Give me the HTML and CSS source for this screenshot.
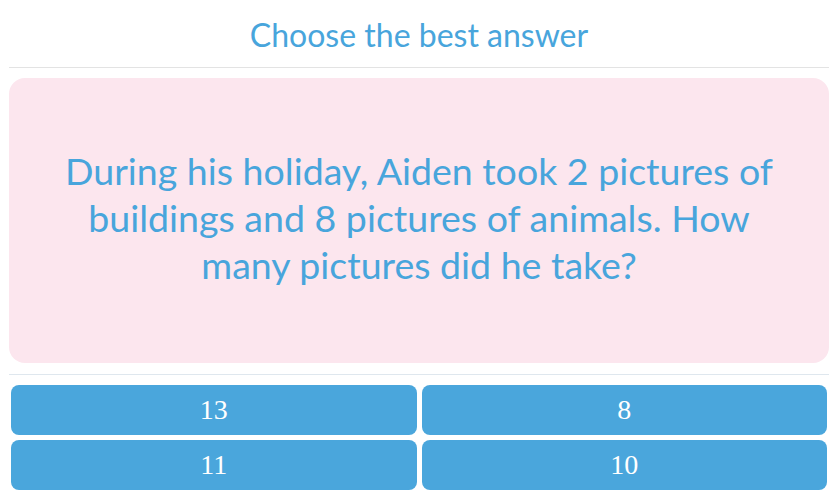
FILE: index.html
```html
<!DOCTYPE html>
<html lang="en">
<head>
  <meta charset="UTF-8">
  <title>Quiz</title>
  <link rel="stylesheet" href="styles.css">
</head>
<body>
  <div class="quiz">
    <!-- Prompt header -->
    <h1 class="prompt">Choose the best answer</h1>

    <!-- Question card -->
    <div class="question">
      <p>During his holiday, Aiden took 2 pictures of buildings and 8 pictures of animals. How many pictures did he take?</p>
    </div>

    <!-- Answer choices -->
    <div class="answers">
      <button class="answer">13</button>
      <button class="answer">8</button>
      <button class="answer">11</button>
      <button class="answer">10</button>
    </div>
  </div>
</body>
</html>
```

FILE: styles.css
```css
/* Quiz screen */
body {
  margin: 0;
  background: #fff;
  font-family: Lato, "Open Sans", sans-serif;
}
.quiz {
  padding: 0 11px 0 9px;
}
.prompt {
  margin: 0;
  height: 67px;
  line-height: 70px;
  text-align: center;
  font-size: 32px;
  font-weight: 400;
  color: #48a5dc;
  border-bottom: 1px solid #e3e3e3;
}
.question {
  box-sizing: border-box;
  margin-top: 10px;
  height: 285px;
  background: #fce6ee;
  border-radius: 16px;
  display: flex;
  align-items: center;
  justify-content: center;
  padding: 0 45px 6px;
}
.question p {
  margin: 0;
  text-align: center;
  font-size: 37.5px;
  line-height: 47px;
  color: #48a5dc;
}
.answers {
  margin-top: 11px;
  padding: 10px 2px 0;
  border-top: 1px solid #dfe7ee;
  display: grid;
  grid-template-columns: 1fr 1fr;
  gap: 5px;
}
.answer {
  height: 50px;
  border: none;
  border-radius: 8px;
  background: #4aa6dc;
  color: #fff;
  font-family: "Liberation Serif", serif;
  font-size: 28px;
  cursor: pointer;
}
```
